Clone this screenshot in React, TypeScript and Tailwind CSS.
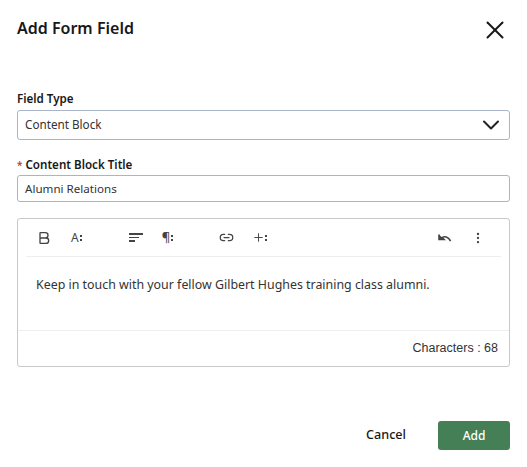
import { X, ChevronDown, Bold, Link2, Plus, EllipsisVertical } from 'lucide-react';

const font = "[font-family:'Noto_Sans',sans-serif]";

function Dots({ gap = 'ml-[2px]' }: { gap?: string }) {
  return <span className={`${gap} flex flex-col gap-[2px]`}><i className="block h-[2px] w-[2px] bg-[#444]" /><i className="block h-[2px] w-[2px] bg-[#444]" /></span>;
}

export default function App() {
  return (
    <div className={`${font} h-[467px] w-[527px] bg-white px-[17px] text-[#181818]`}>
      {/* Header */}
      <div className="flex items-start justify-between pt-[18px]">
        <h1 className="text-[16px] leading-[20px] font-semibold">Add Form Field</h1>
        <X className="-mt-[3px] h-[30px] w-[30px]" strokeWidth={1.6} />
      </div>

      <label className="mt-[46px] block text-[11.6px] leading-[16px] font-semibold">Field Type</label>
      <div className="mt-[3px] flex h-[30px] items-center justify-between rounded-[3px] border border-[#a9b5c9] pr-[4px] pl-[7px] text-[11.7px] text-[#333]">
        Content Block
        <ChevronDown className="h-[28px] w-[28px] text-[#222]" strokeWidth={1.7} />
      </div>

      <label className="mt-[17px] block text-[11.6px] leading-[16px] font-semibold">
        <span className="mr-[3px] text-[10px] text-[#c23934]">*</span>Content Block Title
      </label>
      <div className="mt-[2px] flex h-[27px] items-center rounded-[3px] border border-[#9fb6d6] px-[7px] text-[11.6px] text-[#333]">
        Alumni Relations
      </div>

      {/* Editor */}
      <div className="mt-[16px] rounded-[3px] border border-[#c9c9c9]">
        <div className="mx-[8px] flex h-[38px] items-center border-b border-[#eeeeee] text-[#444]">
          <Bold className="ml-[10px] h-[16px] w-[16px]" strokeWidth={2} />
          <div className="ml-[19px] flex items-center text-[12px]">A<Dots gap="ml-[1px]" /></div>
          <div className="ml-[47px] flex flex-col gap-[2px]">
            <i className="block h-[1.5px] w-[14px] bg-[#444]" />
            <i className="block h-[1.5px] w-[10px] bg-[#444]" />
            <i className="block h-[1.5px] w-[6px] bg-[#444]" />
          </div>
          <div className="ml-[19px] flex items-center text-[13px] font-medium">¶<Dots gap="ml-[1px]" /></div>
          <Link2 className="ml-[46px] h-[15px] w-[15px]" strokeWidth={2} />
          <div className="ml-[18px] flex items-center"><Plus className="h-[13px] w-[13px]" strokeWidth={1.8} /><Dots gap="ml-0" /></div>
          <svg className="ml-auto h-[10px] w-[14px]" viewBox="0 0 14 10" fill="none">
            <path d="M1 1.5V6.5H6L4 4.6C6.5 3 10 3.6 12.6 8" stroke="#444" strokeWidth="1.6" />
            <path d="M1 1.5V6.5H6Z" fill="#444" />
          </svg>
          <EllipsisVertical className="mr-[16px] ml-[19px] h-[14px] w-[14px]" strokeWidth={2} />
        </div>
        <div className="h-[73px] px-[18px] pt-[19px] text-[12.4px] leading-[18px] text-[#333]">
          Keep in touch with your fellow Gilbert Hughes training class alumni.
        </div>
        <div className="flex h-[36px] items-center justify-end border-t border-[#eeeeee] pr-[11px] font-['Liberation_Sans',sans-serif] text-[12.5px] text-[#333]">
          Characters : 68
        </div>
      </div>

      <div className="mt-[54px] flex items-center justify-end">
        <button className="mr-[32px] text-[12.6px] font-medium">Cancel</button>
        <button className="h-[29px] w-[72px] rounded-[3px] bg-[#457f56] text-[12px] font-medium text-white">Add</button>
      </div>
    </div>
  );
}
